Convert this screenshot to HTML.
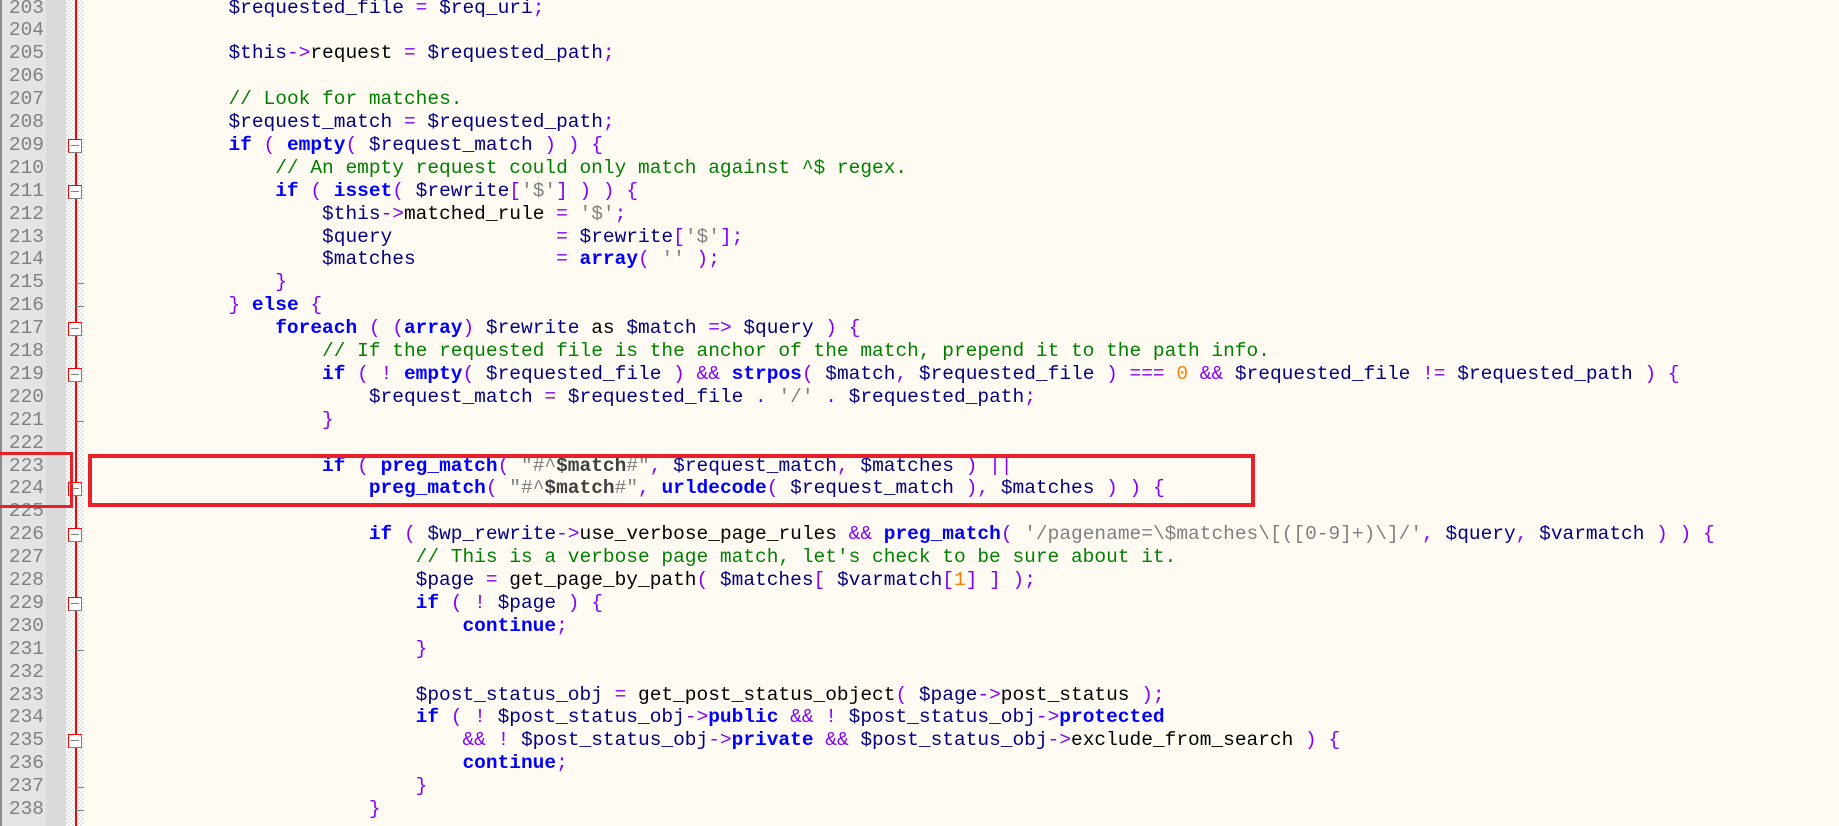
<!DOCTYPE html>
<html><head><meta charset="utf-8"><style>
body{margin:0;width:1839px;height:826px;overflow:hidden;background:#fffbf3;position:relative;font-family:"Liberation Mono","Courier New",monospace;font-size:19.5px}
#g1{position:absolute;left:0;top:0;width:2px;height:826px;background:#8a8a8a}
#g2{position:absolute;left:2px;top:0;width:44px;height:826px;background:#e4e4e4}
#g3{position:absolute;left:46px;top:0;width:20px;height:826px;background:#dadada}
#fm{position:absolute;left:66px;top:0;width:18px;height:826px;background-color:#fff;background-image:linear-gradient(45deg,#e6e6e6 25%,transparent 25%,transparent 75%,#e6e6e6 75%),linear-gradient(45deg,#e6e6e6 25%,transparent 25%,transparent 75%,#e6e6e6 75%);background-size:4px 4px;background-position:0 0,2px 2px}
#rl{position:absolute;left:75px;top:0;width:2px;height:826px;background:#ff0000}
.ln{position:absolute;left:0;width:44px;text-align:right;color:#808080;height:23px;line-height:23px}
.cl{position:absolute;left:88px;height:23px;line-height:23px;white-space:pre;color:#000}
.gd{position:absolute;left:88px;height:23px;background-image:repeating-linear-gradient(to right,transparent 0 46.8px,#c4c4c4 46.8px 47.8px,transparent 47.8px 46.8px);background-size:46.8px 2px;background-repeat:repeat}
.bx{position:absolute;left:68px;width:12px;height:12px;background:#fff;border:1px solid #808080;border-left-color:#f00;border-top-color:#f00}
.bx:after{content:"";position:absolute;left:2px;right:2px;top:5px;height:1px;background:#808080}
.tk{position:absolute;left:76px;width:8px;height:1px;background:#808080}
.v{color:#000080}.o{color:#8000ff}.k{color:#0000ff;font-weight:bold}.c{color:#008000}.s{color:#808080}.n{color:#ff8000}.sb{color:#808080;font-weight:bold}
#hb{position:absolute;left:88px;top:454px;width:1159px;height:45px;border:4px solid #e8202a}
#hn{position:absolute;left:0;top:452px;width:70px;height:50px;border:3px solid #e8202a;border-left:none}
</style></head><body>
<div id="g1"></div><div id="g2"></div><div id="g3"></div><div id="fm"></div><div id="rl"></div>
<div id="L"></div>
<script>
var L=[
[12,'<span class="v">$requested_file</span> <span class="o">=</span> <span class="v">$req_uri</span><span class="o">;</span>'],
[12,''],
[12,'<span class="v">$this</span><span class="o">-&gt;</span>request <span class="o">=</span> <span class="v">$requested_path</span><span class="o">;</span>'],
[12,''],
[12,'<span class="c">// Look for matches.</span>'],
[12,'<span class="v">$request_match</span> <span class="o">=</span> <span class="v">$requested_path</span><span class="o">;</span>'],
[12,'<span class="k">if</span> <span class="o">(</span> <span class="k">empty</span><span class="o">(</span> <span class="v">$request_match</span> <span class="o">)</span> <span class="o">)</span> <span class="o">{</span>','b'],
[16,'<span class="c">// An empty request could only match against ^$ regex.</span>'],
[16,'<span class="k">if</span> <span class="o">(</span> <span class="k">isset</span><span class="o">(</span> <span class="v">$rewrite</span><span class="o">[</span><span class="s">\'$\'</span><span class="o">]</span> <span class="o">)</span> <span class="o">)</span> <span class="o">{</span>','b'],
[20,'<span class="v">$this</span><span class="o">-&gt;</span>matched_rule <span class="o">=</span> <span class="s">\'$\'</span><span class="o">;</span>'],
[20,'<span class="v">$query</span>              <span class="o">=</span> <span class="v">$rewrite</span><span class="o">[</span><span class="s">\'$\'</span><span class="o">];</span>'],
[20,'<span class="v">$matches</span>            <span class="o">=</span> <span class="k">array</span><span class="o">(</span> <span class="s">\'\'</span> <span class="o">);</span>'],
[16,'<span class="o">}</span>','t'],
[12,'<span class="o">}</span> <span class="k">else</span> <span class="o">{</span>','t'],
[16,'<span class="k">foreach</span> <span class="o">(</span> <span class="o">(</span><span class="k">array</span><span class="o">)</span> <span class="v">$rewrite</span> as <span class="v">$match</span> <span class="o">=&gt;</span> <span class="v">$query</span> <span class="o">)</span> <span class="o">{</span>','b'],
[20,'<span class="c">// If the requested file is the anchor of the match, prepend it to the path info.</span>'],
[20,'<span class="k">if</span> <span class="o">(</span> <span class="o">!</span> <span class="k">empty</span><span class="o">(</span> <span class="v">$requested_file</span> <span class="o">)</span> <span class="o">&amp;&amp;</span> <span class="k">strpos</span><span class="o">(</span> <span class="v">$match</span><span class="o">,</span> <span class="v">$requested_file</span> <span class="o">)</span> <span class="o">===</span> <span class="n">0</span> <span class="o">&amp;&amp;</span> <span class="v">$requested_file</span> <span class="o">!=</span> <span class="v">$requested_path</span> <span class="o">)</span> <span class="o">{</span>','b'],
[24,'<span class="v">$request_match</span> <span class="o">=</span> <span class="v">$requested_file</span> <span class="o">.</span> <span class="s">\'/\'</span> <span class="o">.</span> <span class="v">$requested_path</span><span class="o">;</span>'],
[20,'<span class="o">}</span>','t'],
[20,''],
[20,'<span class="k">if</span> <span class="o">(</span> <span class="k">preg_match</span><span class="o">(</span> <span class="s">"#^</span><span class="sb" style="color:#404040">$match</span><span class="s">#"</span><span class="o">,</span> <span class="v">$request_match</span><span class="o">,</span> <span class="v">$matches</span> <span class="o">)</span> <span class="o">||</span>'],
[24,'<span class="k">preg_match</span><span class="o">(</span> <span class="s">"#^</span><span class="sb" style="color:#404040">$match</span><span class="s">#"</span><span class="o">,</span> <span class="k">urldecode</span><span class="o">(</span> <span class="v">$request_match</span> <span class="o">),</span> <span class="v">$matches</span> <span class="o">)</span> <span class="o">)</span> <span class="o">{</span>','b'],
[24,''],
[24,'<span class="k">if</span> <span class="o">(</span> <span class="v">$wp_rewrite</span><span class="o">-&gt;</span>use_verbose_page_rules <span class="o">&amp;&amp;</span> <span class="k">preg_match</span><span class="o">(</span> <span class="s">\'/pagename=\\$matches\\[([0-9]+)\\]/\'</span><span class="o">,</span> <span class="v">$query</span><span class="o">,</span> <span class="v">$varmatch</span> <span class="o">)</span> <span class="o">)</span> <span class="o">{</span>','b'],
[28,'<span class="c">// This is a verbose page match, let\'s check to be sure about it.</span>'],
[28,'<span class="v">$page</span> <span class="o">=</span> get_page_by_path<span class="o">(</span> <span class="v">$matches</span><span class="o">[</span> <span class="v">$varmatch</span><span class="o">[</span><span class="n">1</span><span class="o">]</span> <span class="o">]</span> <span class="o">);</span>'],
[28,'<span class="k">if</span> <span class="o">(</span> <span class="o">!</span> <span class="v">$page</span> <span class="o">)</span> <span class="o">{</span>','b'],
[32,'<span class="k">continue</span><span class="o">;</span>'],
[28,'<span class="o">}</span>','t'],
[28,''],
[28,'<span class="v">$post_status_obj</span> <span class="o">=</span> get_post_status_object<span class="o">(</span> <span class="v">$page</span><span class="o">-&gt;</span>post_status <span class="o">);</span>'],
[28,'<span class="k">if</span> <span class="o">(</span> <span class="o">!</span> <span class="v">$post_status_obj</span><span class="o">-&gt;</span><span class="k">public</span> <span class="o">&amp;&amp;</span> <span class="o">!</span> <span class="v">$post_status_obj</span><span class="o">-&gt;</span><span class="k">protected</span>'],
[32,'<span class="o">&amp;&amp;</span> <span class="o">!</span> <span class="v">$post_status_obj</span><span class="o">-&gt;</span><span class="k">private</span> <span class="o">&amp;&amp;</span> <span class="v">$post_status_obj</span><span class="o">-&gt;</span>exclude_from_search <span class="o">)</span> <span class="o">{</span>','b'],
[32,'<span class="k">continue</span><span class="o">;</span>'],
[28,'<span class="o">}</span>','t'],
[24,'<span class="o">}</span>','t']
];
var h='';
for(var i=0;i<L.length;i++){
 var t=-3.5+i*22.9, ind=L[i][0], w=ind*11.7;
 h+='<div class="ln" style="top:'+t+'px">'+(203+i)+'</div>';
 h+='<div class="gd" style="top:'+t+'px;width:'+w+'px"></div>';
 h+='<div class="cl" style="top:'+t+'px">'+' '.repeat(ind)+L[i][1]+'</div>';
 if(L[i][2]=='b')h+='<div class="bx" style="top:'+(t+5)+'px"></div>';
 if(L[i][2]=='t')h+='<div class="tk" style="top:'+(t+12)+'px"></div>';
}
document.getElementById('L').innerHTML=h;
</script>
<div id="hb"></div><div id="hn"></div>
</body></html>
